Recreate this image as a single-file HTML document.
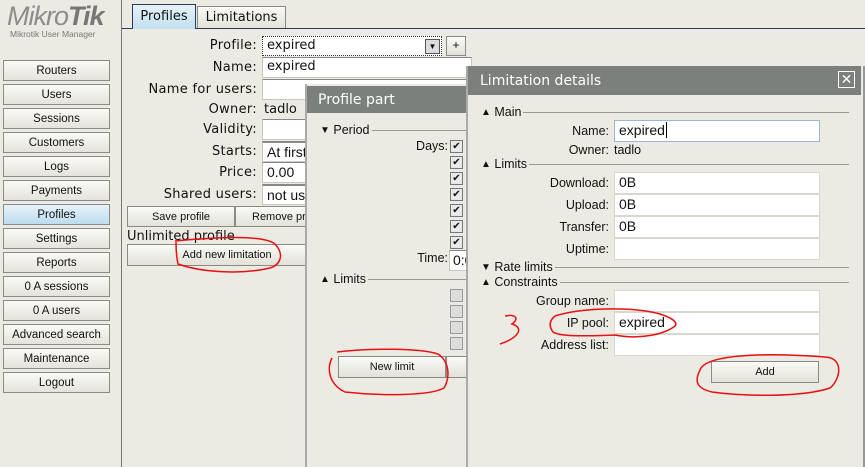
<!DOCTYPE html>
<html><head><meta charset="utf-8"><style>
*{box-sizing:border-box;margin:0;padding:0}
body{width:865px;height:467px;overflow:hidden;background:#ebebe4;font-family:"Liberation Sans","DejaVu Sans",sans-serif;position:relative;color:#111}
.a{position:absolute}
.sb{position:absolute;left:3px;width:107px;height:21px;border:1px solid #8a8a86;background:linear-gradient(#fafaf6,#e4e4dc);font-size:11.5px;text-align:center;line-height:20px}
.sb.on{background:linear-gradient(#e6f2fa,#bcdcee)}
.lbl{position:absolute;text-align:right;font-size:13px;font-family:"DejaVu Sans",sans-serif;letter-spacing:.3px}
.in{position:absolute;background:#fff;border:1px solid #c8c8c0;border-top-color:#888;font-size:13px;padding-left:4px;line-height:18px;font-family:"DejaVu Sans",sans-serif;overflow:hidden;white-space:nowrap}
.btn{position:absolute;border:1px solid #8a8a86;background:linear-gradient(#fafaf6,#e2e2da);font-size:11px;text-align:center;line-height:20px}
.cb{position:absolute;width:13px;height:13px;border:1px solid #777;background:#e8e8e8;font-size:10px;line-height:11px;text-align:center;font-weight:bold}
.hd{position:absolute;background:#7b807d;color:#fff;font-size:14px;font-family:"DejaVu Sans",sans-serif}
.sec{position:absolute;font-size:12.5px;display:flex;align-items:center}
.sec:after{content:"";flex:1;border-top:1px solid #999;margin-left:2px}
.l2{position:absolute;text-align:right;font-size:12.5px}
.in2{position:absolute;background:#fff;border:1px solid #d8d8d0;font-size:14px;padding-left:4px;line-height:19px}
</style></head><body>
<div class="a" style="left:7px;top:1px;font-size:27px;font-style:italic;color:#8c8c8c;letter-spacing:-1px">Mikro<b style="color:#777">Tik</b></div>
<div class="a" style="left:10px;top:29px;font-size:8.5px;color:#777">Mikrotik User Manager</div>
<div class="a" style="left:121px;top:0;width:1px;height:467px;background:#777"></div>
<div class="sb" style="top:60px">Routers</div>
<div class="sb" style="top:84px">Users</div>
<div class="sb" style="top:108px">Sessions</div>
<div class="sb" style="top:132px">Customers</div>
<div class="sb" style="top:156px">Logs</div>
<div class="sb" style="top:180px">Payments</div>
<div class="sb on" style="top:204px">Profiles</div>
<div class="sb" style="top:228px">Settings</div>
<div class="sb" style="top:252px">Reports</div>
<div class="sb" style="top:276px">0 A sessions</div>
<div class="sb" style="top:300px">0 A users</div>
<div class="sb" style="top:324px">Advanced search</div>
<div class="sb" style="top:348px">Maintenance</div>
<div class="sb" style="top:372px">Logout</div>

<div class="a" style="left:122px;top:28px;width:743px;height:1px;background:#2a3a5a"></div>
<div class="a" style="left:132px;top:4px;width:64px;height:25px;border:1px solid #2a3a5a;border-bottom:none;background:linear-gradient(#e6f2fa,#c2dff0);font-size:13px;text-align:center;line-height:24px;font-family:'DejaVu Sans',sans-serif">Profiles</div>
<div class="a" style="left:197px;top:6px;width:89px;height:22px;border:1px solid #888;border-bottom:none;background:linear-gradient(#fafaf6,#e2e2da);font-size:13px;text-align:center;line-height:22px;font-family:'DejaVu Sans',sans-serif">Limitations</div>

<div class="lbl" style="left:130px;width:127px;top:38px">Profile:</div>
<div class="in" style="left:262px;top:36px;width:180px;height:20px;border:1px dotted #333">expired</div>
<div class="a" style="left:425px;top:39px;width:15px;height:15px;border:1px solid #555;background:#ddd;font-size:8px;text-align:center;line-height:13px">▼</div>
<div class="btn" style="left:446px;top:36px;width:20px;height:20px;font-size:12px;line-height:17px">+</div>
<div class="lbl" style="left:130px;width:127px;top:60px">Name:</div>
<div class="in" style="left:262px;top:57px;width:210px;height:21px">expired</div>
<div class="lbl" style="left:130px;width:127px;top:82px">Name for users:</div>
<div class="in" style="left:262px;top:79px;width:210px;height:21px"></div>
<div class="lbl" style="left:130px;width:127px;top:102px">Owner:</div>
<div class="a" style="left:264px;top:102px;font-size:13px;font-family:'DejaVu Sans',sans-serif">tadlo</div>
<div class="lbl" style="left:130px;width:127px;top:122px">Validity:</div>
<div class="in" style="left:262px;top:119px;width:210px;height:21px"></div>
<div class="lbl" style="left:130px;width:127px;top:144px">Starts:</div>
<div class="in" style="left:262px;top:141px;width:210px;height:21px;border-top:2px solid #888;font-family:'Liberation Sans';font-size:14px">At first l</div>
<div class="lbl" style="left:130px;width:127px;top:165px">Price:</div>
<div class="in" style="left:262px;top:162px;width:210px;height:21px;font-family:'Liberation Sans';font-size:14px">0.00</div>
<div class="lbl" style="left:130px;width:127px;top:187px">Shared users:</div>
<div class="in" style="left:262px;top:184px;width:210px;height:21px;border-top:2px solid #888;font-family:'Liberation Sans';font-size:14px">not used</div>
<div class="btn" style="left:127px;top:206px;width:108px;height:21px">Save profile</div>
<div class="btn" style="left:235px;top:206px;width:108px;height:21px">Remove profile</div>
<div class="a" style="left:127px;top:229px;font-size:13px;font-family:'DejaVu Sans',sans-serif">Unlimited profile</div>
<div class="btn" style="left:127px;top:244px;width:200px;height:22px">Add new limitation</div>

<!-- Profile part -->
<div class="a" style="left:305px;top:84px;width:170px;height:383px;background:#ebebe4;border-left:2px solid #aaa;border-right:1px solid #aaa"></div>
<div class="hd" style="left:307px;top:86px;width:165px;height:27px;padding:6px 0 0 11px">Profile part</div>
<div class="sec" style="left:320px;top:123px;width:152px"><span style="font-size:10px">▼</span>&nbsp;Period</div>
<div class="l2" style="left:400px;width:48px;top:139px">Days:</div>
<div class="cb" style="left:450px;top:140px">✔</div>
<div class="cb" style="left:450px;top:156px">✔</div>
<div class="cb" style="left:450px;top:172px">✔</div>
<div class="cb" style="left:450px;top:188px">✔</div>
<div class="cb" style="left:450px;top:204px">✔</div>
<div class="cb" style="left:450px;top:220px">✔</div>
<div class="cb" style="left:450px;top:236px">✔</div>
<div class="l2" style="left:400px;width:48px;top:251px">Time:</div>
<div class="in" style="left:449px;top:250px;width:25px;height:21px;padding-left:3px;font-family:'Liberation Sans';font-size:14px">0:0</div>
<div class="sec" style="left:320px;top:272px;width:152px"><span style="font-size:10px">▲</span>&nbsp;Limits</div>
<div class="cb" style="left:450px;top:289px;border-color:#999;background:#ddd"></div>
<div class="cb" style="left:450px;top:305px;border-color:#999;background:#ddd"></div>
<div class="cb" style="left:450px;top:321px;border-color:#999;background:#ddd"></div>
<div class="cb" style="left:450px;top:337px;border-color:#999;background:#ddd"></div>
<div class="btn" style="left:338px;top:356px;width:108px;height:22px">New limit</div>
<div class="btn" style="left:446px;top:356px;width:30px;height:22px"></div>

<!-- Limitation details -->
<div class="a" style="left:466px;top:66px;width:399px;height:401px;background:#ebebe4;border-left:2px solid #aaa;border-right:2px solid #999"></div>
<div class="hd" style="left:468px;top:66px;width:393px;height:29px;padding:7px 0 0 12px">Limitation details</div>
<div class="a" style="left:838px;top:71px;width:17px;height:17px;border:1px solid #fff;color:#fff;font-size:14px;font-weight:bold;text-align:center;line-height:15px">✕</div>
<div class="sec" style="left:481px;top:105px;width:368px"><span style="font-size:10px">▲</span>&nbsp;Main</div>
<div class="l2" style="left:520px;width:89px;top:124px">Name:</div>
<div class="in2" style="left:614px;top:120px;width:206px;height:22px;border-color:#9ab8d6">expired<span style="border-left:1px solid #000;margin-left:1px"></span></div>
<div class="l2" style="left:520px;width:89px;top:143px">Owner:</div>
<div class="a" style="left:614px;top:143px;font-size:12.5px">tadlo</div>
<div class="sec" style="left:481px;top:157px;width:368px"><span style="font-size:10px">▲</span>&nbsp;Limits</div>
<div class="l2" style="left:520px;width:89px;top:176px">Download:</div>
<div class="in2" style="left:614px;top:172px;width:206px;height:22px">0B</div>
<div class="l2" style="left:520px;width:89px;top:198px">Upload:</div>
<div class="in2" style="left:614px;top:194px;width:206px;height:22px">0B</div>
<div class="l2" style="left:520px;width:89px;top:220px">Transfer:</div>
<div class="in2" style="left:614px;top:216px;width:206px;height:22px">0B</div>
<div class="l2" style="left:520px;width:89px;top:242px">Uptime:</div>
<div class="in2" style="left:614px;top:238px;width:206px;height:22px"></div>
<div class="sec" style="left:481px;top:260px;width:368px"><span style="font-size:10px">▼</span>&nbsp;Rate limits</div>
<div class="sec" style="left:481px;top:275px;width:368px"><span style="font-size:10px">▲</span>&nbsp;Constraints</div>
<div class="l2" style="left:500px;width:109px;top:294px">Group name:</div>
<div class="in2" style="left:614px;top:290px;width:206px;height:22px"></div>
<div class="l2" style="left:500px;width:109px;top:316px">IP pool:</div>
<div class="in2" style="left:614px;top:312px;width:206px;height:22px">expired</div>
<div class="l2" style="left:500px;width:109px;top:338px">Address list:</div>
<div class="in2" style="left:614px;top:334px;width:206px;height:22px"></div>
<div class="btn" style="left:711px;top:361px;width:108px;height:22px">Add</div>

<svg class="a" style="left:0;top:0" width="865" height="467" fill="none" stroke="#e81010" stroke-width="1.5">
<path d="M175 241 C230 236 265 236 275 244 C285 255 280 265 270 268 C240 275 200 272 178 264 C176 255 176 248 176 242"/>
<path d="M337 352 C370 348 420 348 438 354 C450 362 450 378 444 388 C430 396 380 396 345 392 C330 385 326 370 332 358"/>
<path d="M555 316 C580 308 630 306 660 314 C672 318 678 322 675 326 C665 334 640 340 615 335 C590 336 560 337 553 332 C548 325 550 320 555 316"/>
<path d="M505 316 C515 314 520 318 512 324 C525 328 518 338 500 344"/>
<path d="M700 370 C705 355 760 352 825 357 C845 358 840 380 830 388 C800 398 740 396 712 392 C695 388 695 380 700 370"/>
</svg>
</body></html>
